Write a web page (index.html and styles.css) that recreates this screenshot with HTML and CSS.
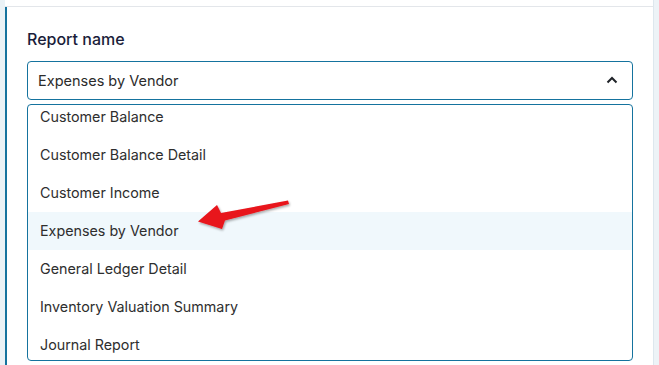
FILE: index.html
```html
<!DOCTYPE html>
<html>
<head>
<meta charset="utf-8">
<link rel="stylesheet" href="styles.css">
</head>
<body>
<div class="page">
  <div class="side-left"></div>
  <div class="main">
    <div class="topbar"></div>
    <div class="panel">
      <div class="label">Report name</div>
      <div class="select">
        <span class="select-value">Expenses by Vendor</span>
        <svg class="chevron" width="12" height="8" viewBox="0 0 12 8"><path d="M1.5 6.5 L6 2 L10.5 6.5" fill="none" stroke="#1f2328" stroke-width="2"/></svg>
      </div>
      <div class="list">
        <div class="list-inner">
          <div class="item">Customer Balance</div>
          <div class="item">Customer Balance Detail</div>
          <div class="item">Customer Income</div>
          <div class="item active">Expenses by Vendor</div>
          <div class="item">General Ledger Detail</div>
          <div class="item">Inventory Valuation Summary</div>
          <div class="item">Journal Report</div>
        </div>
      </div>
    </div>
  </div>
  <div class="side-right"></div>
  <svg class="arrow" width="110" height="45" viewBox="190 195 110 45">
    <defs>
      <filter id="sh" x="-20%" y="-40%" width="140%" height="180%">
        <feDropShadow dx="1" dy="1.5" stdDeviation="1" flood-color="#000" flood-opacity="0.35"/>
      </filter>
    </defs>
    <polygon points="198,221.5 217,205 221,213 288,200.5 289,204 225,220.5 222,229" fill="#e8141b" filter="url(#sh)"/>
  </svg>
</div>
</body>
</html>
```

FILE: styles.css
```css
html, body {
  margin: 0;
  padding: 0;
  background: #ffffff;
}
body {
  font-family: Inter, "Noto Sans", sans-serif;
  width: 659px;
  height: 365px;
  overflow: hidden;
}
.page {
  position: relative;
  display: flex;
  height: 365px;
}
.side-left {
  width: 5px;
  background: #eaf2f6;
}
.side-right {
  width: 5px;
  background: #edf3f7;
  border-left: 1px solid #dde7ee;
}
.main {
  flex: 1;
  display: flex;
  flex-direction: column;
}
.topbar {
  height: 6px;
  border-bottom: 1px solid #e3e6ea;
  background: #fff;
}
.panel {
  flex: 1;
  border-left: 2px solid #15739e;
  padding: 22px 20px 0 20px;
}
.label {
  font-size: 16px;
  line-height: 20px;
  font-weight: 500;
  color: #1a1d3a;
  margin-bottom: 12px;
}
.select {
  height: 37px;
  border: 1px solid #15739e;
  border-radius: 4px;
  display: flex;
  align-items: center;
  justify-content: space-between;
  padding: 0 14px 0 10px;
}
.select-value {
  font-size: 14.5px;
  color: #2b2b2b;
}
.chevron {
  display: block;
  margin-top: -1px;
}
.list {
  margin-top: 4px;
  height: 255px;
  border: 1px solid #15739e;
  border-radius: 4px;
  overflow: hidden;
}
.list-inner {
  margin-top: -7px;
}
.item {
  height: 38px;
  line-height: 38px;
  padding-left: 12px;
  font-size: 14.3px;
  color: #2e2e2e;
}
.item.active {
  background: #f0f8fc;
}
.arrow {
  position: absolute;
  left: 190px;
  top: 195px;
}
```
